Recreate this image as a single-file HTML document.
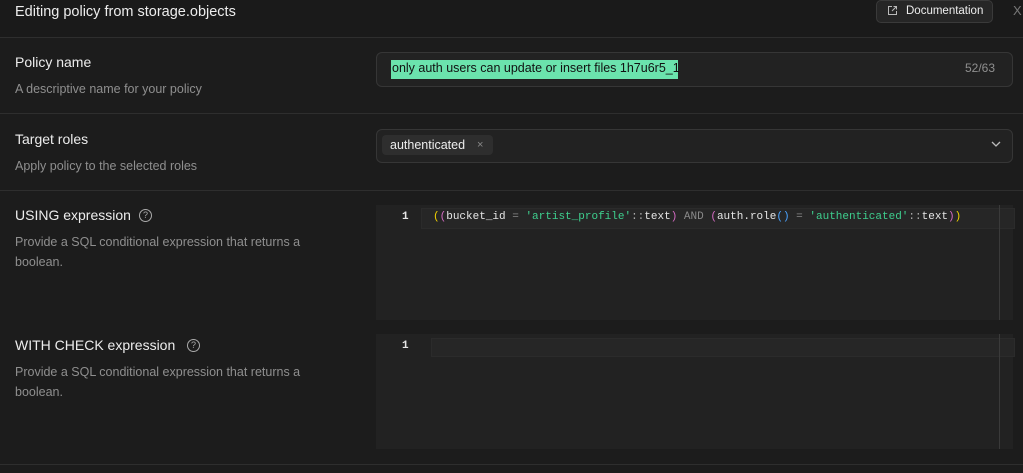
<!DOCTYPE html>
<html><head><style>
body{margin:0;width:1023px;height:473px;background:#1c1c1c;font-family:"Liberation Sans",sans-serif;color:#ededed;overflow:hidden;position:relative}
.a{position:absolute}
.hr{position:absolute;left:0;width:1023px;height:1px;background:#2e2e2e}
.t{font-size:14px;color:#ededed}
.s{font-size:12.5px;color:#8f8f8f;line-height:20px}
.code{font-family:"Liberation Mono",monospace;font-size:11px;color:#e6e6e6}
</style></head><body>
<div class="a" style="left:0;top:0;width:1023px;height:37px;background:#1a1a1a"></div>
<div class="a t" style="left:15px;top:4px;font-size:14.5px">Editing policy from storage.objects</div>
<div class="a" style="left:876px;top:0;width:115px;height:21px;border:1px solid #3a3a3a;border-radius:5px;background:#262626"></div>
<svg class="a" style="left:887px;top:5px" width="11" height="11" viewBox="0 0 11 11" fill="none" stroke="#bbb" stroke-width="1"><path d="M5 1.5H1.5v8h8V6M6.5 1.5h3v3M9.5 1.5L5 6"/></svg>
<div class="a" style="left:906px;top:5px;font-size:11.5px;color:#ededed">Documentation</div>
<div class="a" style="left:1013px;top:3px;font-size:13px;color:#777">X</div>
<div class="hr" style="top:37px"></div>

<div class="a t" style="left:15px;top:54px">Policy name</div>
<div class="a s" style="left:15px;top:79px">A descriptive name for your policy</div>
<div class="a" style="left:376px;top:52px;width:635px;height:33px;border:1px solid #363636;border-radius:6px;background:#222"></div>
<div class="a" style="left:391px;top:60px;width:287px;height:19px;background:#6be3ad"></div>
<div class="a" style="left:392px;top:61px;font-size:12.5px;color:#111">only auth users can update or insert files 1h7u6r5_1</div>
<div class="a" style="left:965px;top:61px;font-size:12px;color:#8f8f8f">52/63</div>
<div class="hr" style="top:113px"></div>

<div class="a t" style="left:15px;top:131px">Target roles</div>
<div class="a s" style="left:15px;top:156px">Apply policy to the selected roles</div>
<div class="a" style="left:376px;top:129px;width:635px;height:32px;border:1px solid #363636;border-radius:6px;background:#222"></div>
<div class="a" style="left:382px;top:135px;width:111px;height:20px;border-radius:4px;background:#2e2e2e"></div>
<div class="a" style="left:390px;top:138px;font-size:12.5px;color:#ededed">authenticated</div>
<div class="a" style="left:477px;top:139px;font-size:11px;color:#888">×</div>
<svg class="a" style="left:991px;top:141px" width="10" height="7" viewBox="0 0 10 7" fill="none" stroke="#bbb" stroke-width="1.3"><path d="M1 1l4 4 4-4"/></svg>
<div class="hr" style="top:190px"></div>

<div class="a t" style="left:15px;top:207px">USING expression</div>
<div class="a" style="left:139px;top:209px;width:11px;height:11px;border:1px solid #aaa;border-radius:50%;font-size:9px;text-align:center;line-height:11px;color:#aaa">?</div>
<div class="a s" style="left:15px;top:232px">Provide a SQL conditional expression that returns a<br>boolean.</div>
<div class="a" style="left:376px;top:205px;width:637px;height:115px;background:#222"></div>
<div class="a" style="left:421px;top:208px;width:592px;height:19px;background:#262626;border:1px solid #2b2b2b"></div>
<div class="a" style="left:999px;top:205px;width:1px;height:115px;background:#3a3a3a"></div>
<div class="a code" style="left:402px;top:211px;font-weight:bold">1</div>
<div class="a code" style="left:433px;top:211px;white-space:pre"><span style="color:#f0d000">(</span><span style="color:#d36ac2">(</span>bucket_id <span style="color:#888">=</span> <span style="color:#3ecf8e">'artist_profile'</span><span style="color:#aaa">::</span>text<span style="color:#d36ac2">)</span> <span style="color:#888">AND</span> <span style="color:#d36ac2">(</span>auth.role<span style="color:#4aa3ff">()</span> <span style="color:#888">=</span> <span style="color:#3ecf8e">'authenticated'</span><span style="color:#aaa">::</span>text<span style="color:#d36ac2">)</span><span style="color:#f0d000">)</span></div>

<div class="a t" style="left:15px;top:337px">WITH CHECK expression</div>
<div class="a" style="left:187px;top:339px;width:11px;height:11px;border:1px solid #aaa;border-radius:50%;font-size:9px;text-align:center;line-height:11px;color:#aaa">?</div>
<div class="a s" style="left:15px;top:362px">Provide a SQL conditional expression that returns a<br>boolean.</div>
<div class="a" style="left:376px;top:334px;width:637px;height:115px;background:#222"></div>
<div class="a" style="left:431px;top:338px;width:582px;height:17px;background:#262626;border:1px solid #2b2b2b"></div>
<div class="a" style="left:999px;top:334px;width:1px;height:115px;background:#3a3a3a"></div>
<div class="a code" style="left:402px;top:340px;font-weight:bold">1</div>
<div class="hr" style="top:464px"></div>
</body></html>
